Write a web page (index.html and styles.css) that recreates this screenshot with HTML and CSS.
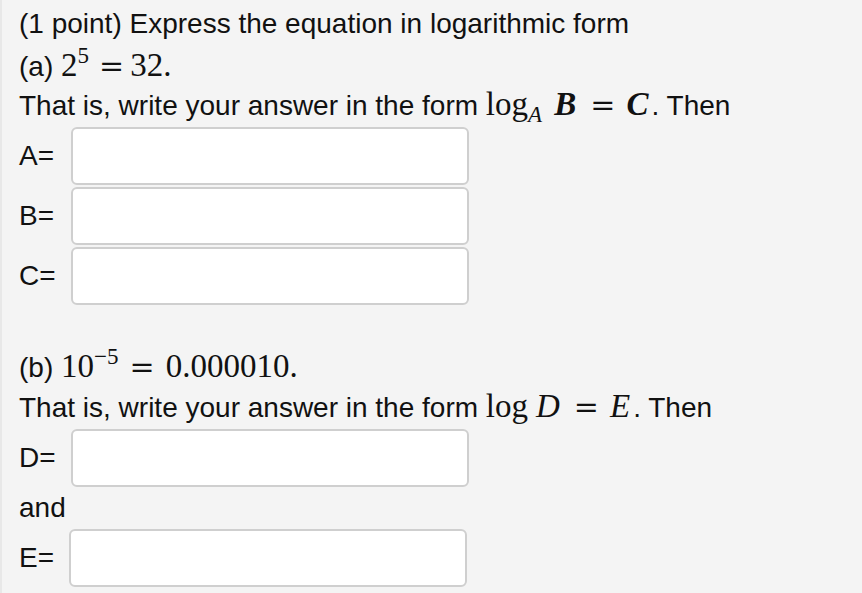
FILE: index.html
```html
<!DOCTYPE html>
<html>
<head>
<meta charset="utf-8">
<link rel="stylesheet" href="styles.css">
</head>
<body>
<div class="problem">
  <div class="line l1">(1 point) Express the equation in logarithmic form</div>
  <div class="line l2">(a) <span class="m">2<sup class="sup">5</sup><span class="eq eq-wide">=</span>32.</span></div>
  <div class="line l3">That is, write your answer in the form <span class="m"><span class="fn">log</span><sub class="sub">A</sub> <b class="bi">B</b><span class="eq">=</span><b class="bi">C</b></span>. Then</div>
  <div class="group g1">
    <div class="row"><span class="lbl">A=</span><div class="box"></div></div>
    <div class="row"><span class="lbl">B=</span><div class="box"></div></div>
    <div class="row"><span class="lbl">C=</span><div class="box"></div></div>
  </div>
  <div class="line l4">(b) <span class="m">10<sup class="sup">&minus;5</sup><span class="eq">=</span>0.000010.</span></div>
  <div class="line l5">That is, write your answer in the form <span class="m"><span class="fn fn-sp">log</span><i class="it">D</i><span class="eq">=</span><i class="it">E</i></span>. Then</div>
  <div class="row r-d"><span class="lbl">D=</span><div class="box"></div></div>
  <div class="line l6">and</div>
  <div class="row r-e"><span class="lbl">E=</span><div class="box"></div></div>
</div>
</body>
</html>
```
FILE: styles.css
```css
html, body {
  margin: 0;
  padding: 0;
  background: #f4f4f4;
}
body {
  width: 862px;
  height: 593px;
  overflow: hidden;
  box-sizing: border-box;
  border-left: 2px solid #e8e8e8;
}
.problem {
  display: flex;
  flex-direction: column;
  padding-left: 17px;
  font-family: "Liberation Sans", Arial, sans-serif;
  font-size: 28px;
  color: #111;
}
.line {
  height: 40px;
  line-height: 40px;
  white-space: nowrap;
}
.l1 { margin-top: 4px; }
.l2 { margin-top: 3px; }
.l3 { margin-top: -1px; }
.m {
  font-family: "Liberation Serif", "Times New Roman", serif;
  font-size: 33px;
  line-height: 1;
}
.fn-sp {
  margin-right: 8px;
}
.sup {
  font-size: 23px;
  vertical-align: 13px;
  line-height: 0;
}
.sub {
  font-size: 23px;
  font-style: italic;
  vertical-align: -7px;
  line-height: 0;
  margin-right: 4px;
}
.eq {
  font-family: "DejaVu Serif", serif;
  font-size: 30px;
  margin: 0 11px;
}
.l2 .eq {
  margin: 0 6px 0 10px;
}
.bi {
  font-style: italic;
  font-weight: bold;
  letter-spacing: 3px;
}
.it {
  font-style: italic;
  letter-spacing: 3px;
}
.group {
  display: flex;
  flex-direction: column;
  gap: 2px;
  margin-top: 1px;
}
.row {
  display: flex;
  align-items: center;
  height: 58px;
}
.lbl {
  width: 52px;
  flex: none;
}
.box {
  width: 394px;
  height: 54px;
  background: #fff;
  border: 2px solid #cfcfcf;
  border-radius: 6px;
}
.l4 { margin-top: 43px; }
.l5 { margin-top: 0; }
.r-d { margin-top: 1px; }
.l6 { margin-top: 1px; }
.r-e { margin-top: 1px; }
.r-e .box { margin-left: -2px; }
```
